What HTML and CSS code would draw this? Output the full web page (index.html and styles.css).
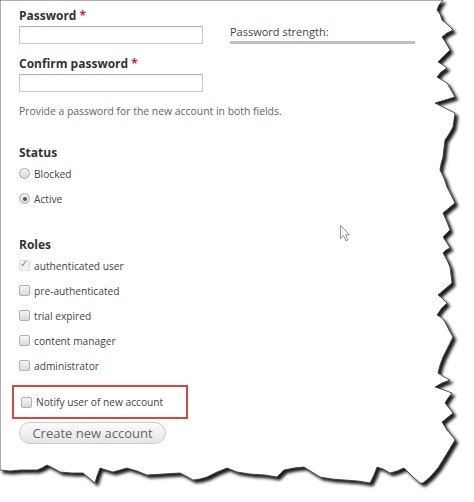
FILE: index.html
```html
<!DOCTYPE html>
<html>
<head>
<meta charset="utf-8">
<link rel="stylesheet" href="styles.css">
</head>
<body>
<svg class="paper" width="474" height="502" viewBox="0 0 474 502" aria-hidden="true">
  <defs>
    <filter id="sh" x="-10%" y="-10%" width="130%" height="130%">
      <feGaussianBlur in="SourceAlpha" stdDeviation="1.6"/>
      <feOffset dx="3" dy="3" result="b"/>
      <feComponentTransfer><feFuncA type="linear" slope="0.9"/></feComponentTransfer>
      <feMerge><feMergeNode/><feMergeNode in="SourceGraphic"/></feMerge>
    </filter>
  </defs>
  <polygon filter="url(#sh)" fill="#fff" stroke="#333" stroke-width="0.8" points="0,0 443,0 439,5 437,10 440,14 442,20 448,25 453,30 447,33 442,37 446,43 450,50 444,56 438,62 443,65 447,68 441,72 437,77 442,80 447,83 451,90 455,97 445,100 435,103 445,108 455,113 454,120 453,127 449,134 445,140 444,148 443,157 441,164 440,170 444,178 447,187 451,195 455,203 449,208 443,213 447,222 450,230 446,234 443,237 447,243 450,248 446,250 443,253 447,260 450,267 451,275 452,283 445,289 438,295 443,299 447,303 441,309 437,315 442,318 445,322 449,330 453,337 448,347 443,357 440,365 438,373 444,377 450,380 442,383 435,387 444,390 452,393 448,398 445,403 449,408 453,413 447,418 442,422 447,430 453,437 455,440 446,455 438,468 430,477 423,483 420,483 412,476 404,468 397,471 390,473 383,469 377,467 374,475 370,483 358,481 345,480 332,479 320,477 312,472 304,467 294,468 284,470 280,474 277,477 265,475 250,474 237,472 232,470 227,468 217,472 207,477 200,479 193,480 186,476 180,473 163,474 147,475 137,471 127,468 120,470 113,472 106,470 100,468 97,476 95,483 89,478 83,473 72,473 60,472 53,468 47,465 42,468 37,470 28,470 20,470 10,471 0,470"/>
  <path class="cursor" d="M340.5 225.5 V238.5 L343.5 235.5 L346 241 L348 240 L345.5 234.8 L349.5 234.8 Z"/>
</svg>

<form class="form">
  <div class="pw-row">
    <div class="field">
      <label class="label">Password <span class="req">*</span></label>
      <div class="input"></div>
    </div>
    <div class="strength">
      <div class="strength-text">Password strength:</div>
      <div class="strength-bar"></div>
    </div>
  </div>

  <div class="field field-confirm">
    <label class="label">Confirm password <span class="req">*</span></label>
    <div class="input"></div>
  </div>

  <p class="desc">Provide a password for the new account in both fields.</p>

  <div class="group group-status">
    <div class="heading">Status</div>
    <div class="option"><span class="radio"></span><span>Blocked</span></div>
    <div class="option"><span class="radio checked"></span><span>Active</span></div>
  </div>

  <div class="group group-roles">
    <div class="heading">Roles</div>
    <div class="option"><span class="check disabled"><span class="tick">✓</span></span><span>authenticated user</span></div>
    <div class="option"><span class="check"></span><span>pre-authenticated</span></div>
    <div class="option"><span class="check"></span><span>trial expired</span></div>
    <div class="option"><span class="check"></span><span>content manager</span></div>
    <div class="option"><span class="check"></span><span>administrator</span></div>
  </div>

  <div class="notify">
    <div class="option"><span class="check"></span><span>Notify user of new account</span></div>
  </div>

  <div class="actions">
    <span class="button">Create new account</span>
  </div>
</form>
</body>
</html>
```

FILE: styles.css
```css
html, body {
  margin: 0;
  padding: 0;
  background: #fff;
}
body {
  width: 474px;
  height: 502px;
  position: relative;
  overflow: hidden;
  font-family: "Open Sans", "DejaVu Sans", sans-serif;
  color: #333;
}
.paper {
  position: absolute;
  left: 0;
  top: 0;
  z-index: 0;
}
.cursor {
  fill: #fff;
  stroke: #777;
  stroke-width: 0.8;
}
.form {
  position: relative;
  z-index: 1;
  padding: 8px 0 0 19px;
  margin: 0;
}
.pw-row {
  display: flex;
  gap: 27px;
  align-items: flex-start;
}
.label {
  display: block;
  font-weight: bold;
  font-size: 12px;
  line-height: 16px;
  color: #333;
  margin-bottom: 2px;
}
.req {
  color: #e01b1b;
}
.input {
  width: 182px;
  height: 16px;
  border: 1px solid #c8c8c8;
  border-top-color: #b4b4b4;
  background: #fff;
  box-shadow: inset 0 1px 1px rgba(0,0,0,0.05);
}
.strength {
  padding-top: 17px;
  width: 185px;
}
.strength-text {
  font-size: 11px;
  line-height: 14px;
  color: #444;
}
.strength-bar {
  height: 3px;
  background: #c0c0c0;
  margin-top: 2px;
}
.field-confirm {
  margin-top: 12px;
}
.desc {
  margin: 12px 0 0;
  font-size: 10.4px;
  line-height: 14px;
  color: #666;
}
.group-status {
  margin-top: 27px;
}
.group-roles {
  margin-top: 26px;
}
.heading {
  font-weight: bold;
  font-size: 12px;
  line-height: 16px;
  color: #333;
}
.option {
  display: flex;
  align-items: center;
  gap: 4px;
  height: 25px;
  font-size: 10.2px;
  color: #444;
}
.radio {
  width: 9px;
  height: 9px;
  border-radius: 50%;
  border: 1px solid #b0b0b0;
  background: linear-gradient(#f4f4f4, #d8d8d8);
  position: relative;
  flex: none;
}
.radio.checked::after {
  content: "";
  position: absolute;
  left: 2.5px;
  top: 2.5px;
  width: 4px;
  height: 4px;
  border-radius: 50%;
  background: #555;
}
.check {
  width: 9px;
  height: 9px;
  border-radius: 2px;
  border: 1px solid #b0b0b0;
  background: linear-gradient(#f6f6f6, #dadada);
  position: relative;
  flex: none;
}
.check.disabled {
  border-color: #ddd;
  background: #f2f2f2;
}
.tick {
  position: absolute;
  left: 0;
  top: -3px;
  font-size: 10px;
  line-height: 12px;
  color: #888;
  font-family: "DejaVu Sans", sans-serif;
}
.notify {
  margin-top: 7px;
  margin-left: -7px;
  width: 158px;
  padding: 3px 7px 3px 7px;
  border: 2px solid #d9453f;
}
.notify .option {
  height: 24px;
}
.actions {
  margin-top: 2px;
}
.button {
  display: inline-block;
  width: 145px;
  height: 20px;
  line-height: 20px;
  text-align: center;
  border: 1px solid #ccc;
  border-radius: 11px;
  background: linear-gradient(#fbfbfb, #e6e6e6);
  font-size: 13px;
  color: #666;
}
```
